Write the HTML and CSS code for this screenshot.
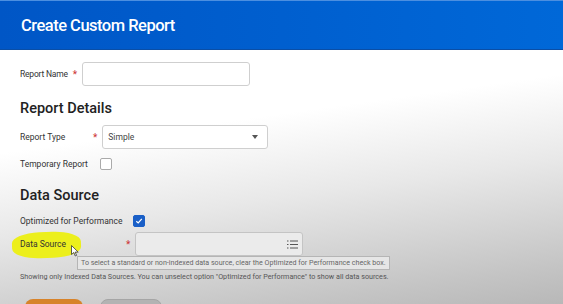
FILE: index.html
```html
<!DOCTYPE html>
<html lang="en">
<head>
  <meta charset="UTF-8">
  <title>Create Custom Report</title>
  <link rel="stylesheet" href="styles.css">
</head>
<body>
  <div class="header">
    <h1>Create Custom Report</h1>
  </div>

  <div class="content">
    <div class="row row-name">
      <span class="label">Report Name</span>
      <span class="req">*</span>
      <div class="input input-name"></div>
    </div>

    <h2>Report Details</h2>
    <div class="row row-type">
      <span class="label label-w1">Report Type</span>
      <span class="req">*</span>
      <div class="input input-select">
        <span>Simple</span>
        <span class="caret"></span>
      </div>
    </div>
    <div class="row row-temp">
      <span class="label label-w1">Temporary Report</span>
      <span class="checkbox"></span>
    </div>

    <h2 class="h-ds">Data Source</h2>
    <div class="row row-opt">
      <span class="label">Optimized for Performance</span>
      <span class="checkbox checked">
        <svg width="8" height="8" viewBox="0 0 8 8"><path d="M1.3 4.2 L3.2 6 L6.8 1.8" fill="none" stroke="#fff" stroke-width="1.2"/></svg>
      </span>
    </div>
    <div class="row row-ds">
      <span class="label label-w2 highlight">Data Source</span>
      <span class="req">*</span>
      <div class="input input-ds">
        <svg class="list-icon" width="11" height="9" viewBox="0 0 11 9">
          <path d="M0 1h1.5M3 1h8M0 4.5h1.5M3 4.5h8M0 8h1.5M3 8h8" stroke="#555" stroke-width="1"/>
        </svg>
      </div>
      <svg class="cursor" width="8" height="12" viewBox="0 0 8 12"><path d="M0.5 0.5 L0.5 9.5 L2.8 7.5 L4.3 11 L5.6 10.4 L4.2 7.1 L7.2 7.1 Z" fill="#fff" stroke="#333" stroke-width="0.8"/></svg>
      <div class="tooltip">To select a standard or non-indexed data source, clear the Optimized for Performance check box.</div>
    </div>
    <p class="hint">Showing only Indexed Data Sources. You can unselect option "Optimized for Performance" to show all data sources.</p>

    <div class="buttons">
      <span class="btn btn-ok"></span>
      <span class="btn btn-cancel"></span>
    </div>
  </div>
</body>
</html>
```

FILE: styles.css
```css
body {
  margin: 0;
  font-family: Roboto, "Open Sans", sans-serif;
  color: #333;
  height: 304px;
  overflow: hidden;
  background: linear-gradient(172deg, #fff 0%, #fff 40%, #e8e8e8 62%, #c4c4c4 90%, #b8b8b8 100%);
}

.header {
  height: 50px;
  background: linear-gradient(to right, #0056c6, #0068d8);
  border-top: 1px solid #4c8fe0;
  border-bottom: 1px solid #0a4ea6;
  box-sizing: border-box;
  display: flex;
  align-items: center;
  padding-left: 21px;
}

h1 {
  margin: 0;
  color: #fff;
  font-size: 16.5px;
  font-weight: 500;
  letter-spacing: -0.5px;
}

.content {
  padding: 12px 20px 0 20px;
}

.row {
  display: flex;
  align-items: center;
  font-size: 8.5px;
  position: relative;
}

.label {
  color: #333;
}

.label-w1 {
  width: 69px;
}

.label-w2 {
  width: 106px;
}

.req {
  color: #c33;
  font-size: 10px;
  margin: 0 5px 0 4px;
}

.row-name .label {
  letter-spacing: -0.2px;
}

.row-name .req {
  margin-left: 5px;
}

.input {
  border: 1px solid #cfcfcf;
  border-radius: 3px;
  background: #fff;
  box-sizing: border-box;
  height: 24px;
}

.input-name {
  width: 168px;
}

h2 {
  margin: 14px 0 8px 0;
  font-size: 14.5px;
  font-weight: 500;
  color: #222;
}

.input-select {
  width: 166px;
  display: flex;
  align-items: center;
  justify-content: space-between;
  padding: 0 9px 0 5px;
  font-size: 8.5px;
  color: #444;
}

.caret {
  width: 0;
  height: 0;
  border-left: 3px solid transparent;
  border-right: 3px solid transparent;
  border-top: 4px solid #555;
}

.row-temp {
  margin-top: 9px;
}

.row-temp .checkbox {
  margin-left: 11px;
}

.checkbox {
  width: 12px;
  height: 12px;
  border: 1px solid #aaa;
  border-radius: 2px;
  box-sizing: border-box;
  background: #fff;
  display: flex;
  align-items: center;
  justify-content: center;
}

.checkbox.checked {
  background: #1a5fc7;
  border-color: #1a5fc7;
  margin-left: 10px;
}

.h-ds {
  margin-top: 17px;
  margin-bottom: 11px;
}

.row-ds {
  margin-top: 5px;
}

.highlight {
  position: relative;
}

.highlight::before {
  content: "";
  position: absolute;
  left: -8px;
  top: -7px;
  width: 69px;
  height: 26px;
  background: #ecef1c;
  border-radius: 40%;
  z-index: -1;
  transform: rotate(-2deg);
}

.row-ds .req {
  margin-left: 0;
  margin-right: 5px;
}

.input-ds {
  width: 168px;
  display: flex;
  align-items: center;
  justify-content: flex-end;
  padding-right: 4px;
  border-color: #c4c4c4;
  background: #ebebeb;
}

.cursor {
  position: absolute;
  left: 51px;
  top: 13px;
}

.tooltip {
  position: absolute;
  left: 57px;
  top: 24px;
  height: 14px;
  box-sizing: border-box;
  border: 1px solid #b5b5b5;
  background: #e6e6e6;
  color: #666;
  font-size: 7.1px;
  line-height: 12px;
  padding: 0 3px;
  white-space: nowrap;
}

.hint {
  margin: 16px 0 0 0;
  font-size: 7.2px;
  color: #555;
  white-space: nowrap;
}

.buttons {
  display: flex;
  gap: 17px;
  margin: 18px 0 0 5px;
}

.btn {
  width: 58px;
  height: 16px;
  border-radius: 8px;
}

.btn-ok {
  background: #d7832a;
}

.btn-cancel {
  width: 60px;
  background: #b3b3b3;
  border: 1px solid #a5a5a5;
}
```
